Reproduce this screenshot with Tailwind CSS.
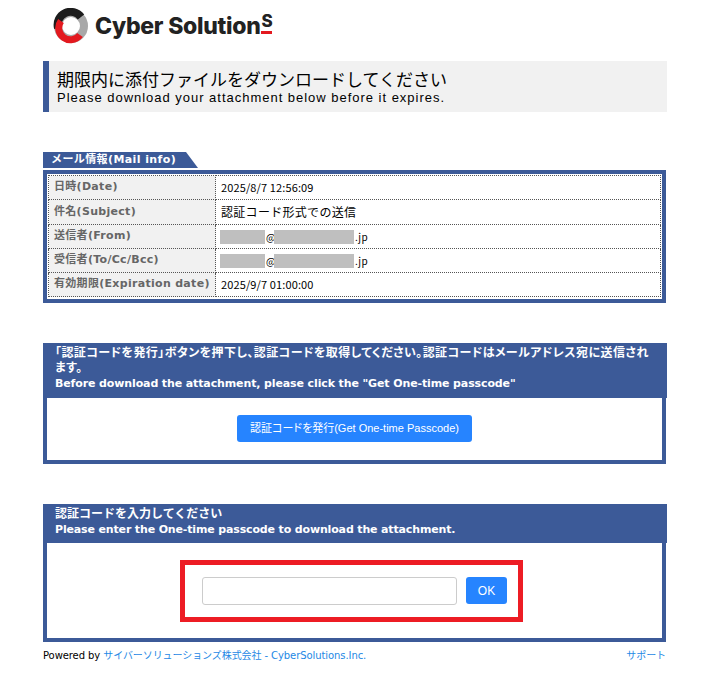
<!DOCTYPE html>
<html lang="ja">
<head>
    <meta charset="UTF-8">
    <meta name="viewport" content="width=device-width, initial-scale=1.0">
    <title>Cyber Solutions</title>
    <script src="https://cdn.jsdelivr.net/npm/@tailwindcss/browser@4"></script>
</head>
<body class="bg-white text-black font-['DejaVu_Sans','Noto_Sans_CJK_JP',sans-serif]">
    <div class="w-[715px] h-[681px] overflow-hidden pl-[43px] pt-[9px]">
        <!-- Logo -->
        <div class="flex items-center h-[34px] pl-[10px] gap-[6px]">
            <svg width="36" height="36" viewBox="0 0 36 36" class="shrink-0">
                <circle cx="18" cy="18" r="13" fill="none" stroke="#a8a8a8" stroke-width="8"/>
                <path d="M5 20 A13 13 0 0 1 28 9" fill="none" stroke="#1c1c1c" stroke-width="8"/>
                <path d="M8 13 A11.5 11.5 0 0 0 27 27" fill="none" stroke="#e3191f" stroke-width="7"/>
                <circle cx="18" cy="18" r="7" fill="#fff"/>
            </svg>
            <div class="flex items-start font-['Inter',sans-serif] font-extrabold text-[23px] leading-[28px] tracking-[-0.3px] text-[#222]">
                <span class="mr-[5px]">Cyber</span><span>Solution</span><span class="text-[17px] leading-[19px] border-b-[3px] border-[#e3191f] h-[22px] ml-[1px]">S</span>
            </div>
        </div>

        <!-- Title -->
        <div class="mt-[18px] w-[624px] h-[51px] bg-[#f1f1f1] border-l-[6px] border-[#3c5a98] pl-[8px] pt-[7px]">
            <h1 class="text-[17px] leading-[22px] font-normal font-['Noto_Sans_CJK_JP',sans-serif]">期限内に添付ファイルをダウンロードしてください</h1>
            <p class="text-[13px] leading-[15px] tracking-[0.98px] font-['Liberation_Sans',sans-serif] whitespace-nowrap">Please download your attachment below before it expires.</p>
        </div>

        <!-- Mail info -->
        <div class="mt-[40px] w-[623px]">
            <div class="w-[155px] h-[16px] mb-[2px] bg-[#3c5a98] text-white text-[11px] leading-[15px] font-bold tracking-[0.4px] pl-[8px] whitespace-nowrap [clip-path:polygon(0_0,143px_0,155px_16px,0_16px)]">メール情報(Mail info)</div>
            <div class="border-4 border-[#3c5a98] p-[1px] pb-[2px]">
                <table class="w-full border-collapse text-[11px] h-[122px] tracking-[0.3px]">
                    <tbody>
                        <tr class="h-[24px]">
                            <th class="w-[167px] border border-dotted border-[#555] bg-[#f1f1f1] text-[#666] text-left font-bold pl-[5px] whitespace-nowrap">日時(Date)</th>
                            <td class="border border-dotted border-[#555] pl-[5px] text-[11px] tracking-[0.12px] font-['Noto_Sans_CJK_JP',sans-serif]">2025/8/7 12:56:09</td>
                        </tr>
                        <tr class="h-[25px]">
                            <th class="border border-dotted border-[#555] bg-[#f1f1f1] text-[#666] text-left font-bold pl-[5px] whitespace-nowrap">件名(Subject)</th>
                            <td class="border border-dotted border-[#555] pl-[5px] text-[12px] font-['Noto_Sans_CJK_JP',sans-serif]">認証コード形式での送信</td>
                        </tr>
                        <tr class="h-[24px]">
                            <th class="border border-dotted border-[#555] bg-[#f1f1f1] text-[#666] text-left font-bold pl-[5px] whitespace-nowrap">送信者(From)</th>
                            <td class="border border-dotted border-[#555] pl-[4px] text-[10px] font-['Noto_Sans_CJK_JP',sans-serif]">
                                <div class="flex items-center">
                                    <span class="w-[45px] h-[14px] bg-[#bfbfbf]"></span><span class="w-[9px] pl-[1px]">@</span><span class="w-[80px] h-[14px] bg-[#bfbfbf]"></span><span class="pl-[1px]">.jp</span>
                                </div>
                            </td>
                        </tr>
                        <tr class="h-[24px]">
                            <th class="border border-dotted border-[#555] bg-[#f1f1f1] text-[#666] text-left font-bold pl-[5px] whitespace-nowrap">受信者(To/Cc/Bcc)</th>
                            <td class="border border-dotted border-[#555] pl-[4px] text-[10px] font-['Noto_Sans_CJK_JP',sans-serif]">
                                <div class="flex items-center">
                                    <span class="w-[45px] h-[14px] bg-[#bfbfbf]"></span><span class="w-[9px] pl-[1px]">@</span><span class="w-[80px] h-[14px] bg-[#bfbfbf]"></span><span class="pl-[1px]">.jp</span>
                                </div>
                            </td>
                        </tr>
                        <tr class="h-[24px]">
                            <th class="border border-dotted border-[#555] bg-[#f1f1f1] text-[#666] text-left font-bold pl-[5px] whitespace-nowrap">有効期限(Expiration date)</th>
                            <td class="border border-dotted border-[#555] pl-[5px] text-[11px] tracking-[0.12px] font-['Noto_Sans_CJK_JP',sans-serif]">2025/9/7 01:00:00</td>
                        </tr>
                    </tbody>
                </table>
            </div>
        </div>

        <!-- Get passcode -->
        <div class="mt-[40px] w-[624px]">
            <div class="h-[55px] bg-[#3c5a98] text-white text-[12px] leading-[15px] font-bold pl-[12px] pr-[14px] pt-[3px]">
                <p class="[font-feature-settings:'palt'] tracking-[0.42px]">「認証コードを発行」ボタンを押下し、認証コードを取得してください。認証コードはメールアドレス宛に送信されます。</p>
                <p class="text-[11px] tracking-[-0.12px] whitespace-nowrap">Before download the attachment, please click the "Get One-time passcode"</p>
            </div>
            <div class="w-[623px] h-[66px] border-4 border-t-0 border-[#3c5a98] flex justify-center pt-[17px]">
                <button class="w-[235px] h-[27px] bg-[#2684ff] rounded-[3px] text-white text-[11px] [font-feature-settings:'palt'] font-['Liberation_Sans','Noto_Sans_CJK_JP',sans-serif]">認証コードを発行(Get One-time Passcode)</button>
            </div>
        </div>

        <!-- Enter passcode -->
        <div class="mt-[40px] w-[624px]">
            <div class="h-[39px] bg-[#3c5a98] text-white text-[12px] leading-[15px] font-bold pl-[12px] pt-[3px]">
                <p>認証コードを入力してください</p>
                <p class="text-[11px] tracking-[-0.15px] whitespace-nowrap">Please enter the One-time passcode to download the attachment.</p>
            </div>
            <div class="w-[623px] h-[99px] border-4 border-t-0 border-[#3c5a98] pt-[17px] pl-[133px]">
                <div class="w-[343px] h-[62px] border-[5px] border-[#ed1c24] flex items-start gap-[9px] pl-[17px] pt-[12px]">
                    <input type="text" class="w-[255px] h-[28px] border border-[#ccc] rounded-[3px] bg-white">
                    <button class="w-[41px] h-[27px] bg-[#2684ff] rounded-[3px] text-white text-[12px] font-['Liberation_Sans',sans-serif]">OK</button>
                </div>
            </div>
        </div>

        <!-- Footer -->
        <div class="w-[623px] mt-[7px] flex justify-between text-[10px] leading-[13px] tracking-[-0.08px]">
            <p>Powered by <a href="#" class="text-[#1e88e5]">サイバーソリューションズ株式会社 - CyberSolutions.Inc.</a></p>
            <a href="#" class="text-[#1e88e5]">サポート</a>
        </div>
    </div>
</body>
</html>
